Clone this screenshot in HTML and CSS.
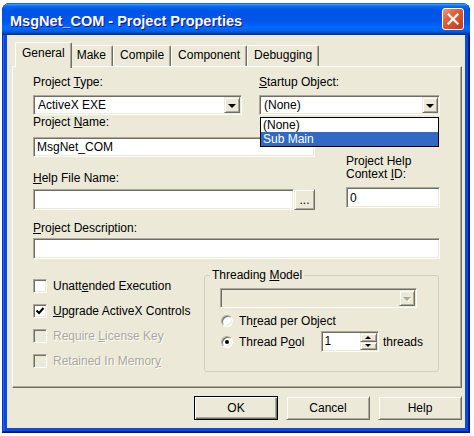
FILE: index.html
```html
<!DOCTYPE html>
<html>
<head>
<meta charset="utf-8">
<link rel="stylesheet" href="styles.css">
</head>
<body>
<div class="window">
  <div class="titlebar">
    <span class="title">MsgNet_COM - Project Properties</span>
    <div class="close">
      <svg width="12" height="12" viewBox="0 0 12 12"><path d="M1.5 1.5L10.5 10.5M10.5 1.5L1.5 10.5" stroke="#fff" stroke-width="2.2" stroke-linecap="square"/></svg>
    </div>
  </div>
  <div class="client">
    <div class="tabs">
      <div class="tab active">General</div>
      <div class="tab">Make</div>
      <div class="tab">Compile</div>
      <div class="tab">Component</div>
      <div class="tab">Debugging</div>
    </div>
    <div class="panel">
      <div class="row-top">
        <div class="col-type">
          <div class="lbl">Project <u>T</u>ype:</div>
          <div class="field combo"><span class="val">ActiveX EXE</span><span class="drop"><i class="tri"></i></span></div>
        </div>
        <div class="col-startup">
          <div class="lbl"><u>S</u>tartup Object:</div>
          <div class="combo-wrap">
            <div class="field combo"><span class="val">(None)</span><span class="drop"><i class="tri"></i></span></div>
            <ul class="listbox">
              <li>(None)</li>
              <li class="sel">Sub Main</li>
            </ul>
          </div>
        </div>
      </div>
      <div class="row-mid">
        <div class="col-left">
          <div class="lbl">Project <u>N</u>ame:</div>
          <div class="field text name-box">MsgNet_COM</div>
          <div class="lbl lbl-help"><u>H</u>elp File Name:</div>
          <div class="file-row">
            <div class="field text"></div>
            <div class="raised btn-browse">...</div>
          </div>
        </div>
        <div class="col-right">
          <div class="lbl lbl-two">Project Help<br>Context <u>I</u>D:</div>
          <div class="field text ctx-box">0</div>
        </div>
      </div>
      <div class="lbl lbl-desc"><u>P</u>roject Description:</div>
      <div class="field text desc-box"></div>
      <div class="row-bottom">
        <div class="checks">
          <div class="chk"><span class="cbox"></span><span>Unatt<u>e</u>nded Execution</span></div>
          <div class="chk"><span class="cbox"><svg width="10" height="10" viewBox="0 0 10 10"><path d="M1.5 4.5L4 7L8.5 2" fill="none" stroke="#000" stroke-width="2"/></svg></span><span><u>U</u>pgrade ActiveX Controls</span></div>
          <div class="chk disabled"><span class="cbox"></span><span>Require <u>L</u>icense Key</span></div>
          <div class="chk disabled"><span class="cbox"></span><span>Retained In Memor<u>y</u></span></div>
        </div>
        <fieldset class="group">
          <legend>Threading <u>M</u>odel</legend>
          <div class="field combo dcombo"><span class="val"></span><span class="drop"><i class="tri dis"></i></span></div>
          <div class="radio-row">
            <span class="radio"></span><span class="rlabel">Th<u>r</u>ead per Object</span>
          </div>
          <div class="radio-row row2">
            <span class="radio on"></span><span class="rlabel pool">Thread P<u>o</u>ol</span>
            <div class="field spin"><span class="val">1</span>
              <span class="spin-btns"><span class="raised sb"><i class="tri-up"></i></span><span class="raised sb"><i class="tri-dn"></i></span></span>
            </div>
            <span class="threads">threads</span>
          </div>
        </fieldset>
      </div>
    </div>
    <div class="buttons">
      <div class="btn default">OK</div>
      <div class="btn raised">Cancel</div>
      <div class="btn raised">Help</div>
    </div>
  </div>
</div>
</body>
</html>
```
FILE: styles.css
```css
* { box-sizing: border-box; }
body {
  margin: 0;
  background: #fff;
  font-family: "Liberation Sans", Arial, sans-serif;
  font-size: 12px;
  color: #000;
}
u { text-decoration: underline; text-underline-offset: 1px; }

.window {
  margin: 3px 0 0 2px;
  width: 468px;
  height: 430px;
  display: flex;
  flex-direction: column;
  background: #0a4bdc;
  border-radius: 8px 8px 0 0;
  box-shadow: inset -1px -1px #00138c, inset 1px 0 #0831d9, inset -2px -2px #001ea0, inset 2px 0 #166aee;
  overflow: hidden;
}
.titlebar {
  height: 32px;
  flex: none;
  display: flex;
  align-items: center;
  justify-content: space-between;
  padding: 0 6px 0 8px;
  border-radius: 8px 8px 0 0;
  background: linear-gradient(to bottom, #0058ee 0%, #3593ff 4%, #288eff 6%, #127dff 8%, #036ffc 10%, #0262ee 14%, #0057e5 20%, #0054e3 24%, #0055eb 56%, #005bf5 66%, #026afe 76%, #0062ef 86%, #0052d6 92%, #0040ab 94%, #003092 100%);
}
.title {
  color: #fff;
  font-weight: bold;
  font-size: 14.5px;
  padding-top: 3px;
  text-shadow: 1px 1px #0f1089;
  white-space: nowrap;
}
.close {
  width: 22px;
  height: 22px;
  border: 1px solid #fff;
  border-radius: 3px;
  background: linear-gradient(135deg, #f09a7c 0%, #e2613d 35%, #d24a26 70%, #c23a1a 100%);
  display: flex;
  align-items: center;
  justify-content: center;
}

.client {
  flex: 1;
  margin: 0 5px 5px;
  background: #ece9d8;
  padding: 7px 3px 8px 5px;
  display: flex;
  flex-direction: column;
}

.tabs {
  height: 24px;
  flex: none;
  display: flex;
  align-items: flex-end;
  padding-left: 5px;
  position: relative;
  z-index: 1;
}
.tab {
  height: 21px;
  padding: 2px 6px 0;
  line-height: 15px;
  white-space: nowrap;
  background: #ece9d8;
  border: 1px solid #fff;
  border-bottom: none;
  border-right-color: #716f64;
  box-shadow: inset -1px 0 #aca899;
  border-radius: 2px 2px 0 0;
}
.tab.active {
  height: 26px;
  margin: 0 -2px -2px;
  padding-top: 3px;
  position: relative;
  z-index: 2;
}

.panel {
  height: 322px;
  flex: none;
  border: 1px solid;
  border-color: #fff #716f64 #716f64 #fff;
  box-shadow: inset -1px -1px #aca899;
  padding: 8px 21px 0 20px;
}

.lbl { line-height: 15px; white-space: nowrap; }

.field {
  background: #fff;
  border: 1px solid;
  border-color: #aca899 #fff #fff #aca899;
  box-shadow: inset 1px 1px #716f64, inset -1px -1px #ece9d8;
}
.raised {
  background: #ece9d8;
  border: 1px solid;
  border-color: #ece9d8 #716f64 #716f64 #ece9d8;
  box-shadow: inset 1px 1px #fff, inset -1px -1px #aca899;
}

.row-top { display: flex; gap: 17px; }
.col-type { width: 209px; }
.col-startup { width: 181px; }
.row-top .lbl { margin-bottom: 5px; }

.combo {
  height: 20px;
  display: flex;
  align-items: center;
  padding: 1px;
}
.combo .val { flex: 1; padding-left: 3px; line-height: 15px; white-space: nowrap; }
.drop {
  width: 16px;
  height: 16px;
  flex: none;
  display: flex;
  align-items: center;
  justify-content: center;
  background: #ece9d8;
  border: 1px solid;
  border-color: #ece9d8 #716f64 #716f64 #ece9d8;
  box-shadow: inset 1px 1px #fff, inset -1px -1px #aca899;
}
.tri {
  width: 0;
  height: 0;
  border-left: 4px solid transparent;
  border-right: 4px solid transparent;
  border-top: 4px solid #000;
  margin-top: 1px;
}
.tri.dis { border-top-color: #aca899; filter: drop-shadow(1px 1px 0 #fff); }

.combo-wrap { position: relative; }
.listbox {
  position: absolute;
  top: 22px;
  left: 1px;
  right: 1px;
  margin: 0;
  padding: 0;
  list-style: none;
  background: #fff;
  border: 1px solid #000;
  z-index: 5;
}
.listbox li { height: 14px; line-height: 14px; padding-left: 2px; white-space: nowrap; }
.listbox li.sel { background: #316ac5; color: #fff; }

.text {
  display: flex;
  align-items: center;
  padding: 0 3px;
  white-space: nowrap;
}

.row-mid {
  display: grid;
  grid-template-columns: 282px 94px;
  column-gap: 31px;
}
.name-box { margin-top: 7px; height: 20px; }
.lbl-help { margin-top: 14px; }
.file-row { margin-top: 3px; display: flex; height: 21px; }
.file-row .text { flex: 1; height: 21px; }
.btn-browse {
  width: 21px;
  height: 21px;
  flex: none;
  display: flex;
  align-items: flex-end;
  justify-content: center;
  padding-bottom: 4px;
  line-height: 10px;
}
.col-right { align-self: end; padding-bottom: 2px; }
.lbl-two { line-height: 13px; }
.ctx-box { margin-top: 6px; height: 21px; }

.lbl-desc { margin-top: 11px; margin-bottom: 2px; }
.desc-box { height: 21px; }

.row-bottom { display: flex; margin-top: 10px; }
.checks { width: 171px; flex: none; padding-top: 10px; }
.chk {
  display: flex;
  align-items: center;
  gap: 6px;
  height: 14px;
  margin-bottom: 11px;
  white-space: nowrap;
}
.cbox {
  width: 14px;
  height: 14px;
  flex: none;
  display: flex;
  align-items: center;
  justify-content: center;
  background: #fff;
  border: 1px solid;
  border-color: #aca899 #fff #fff #aca899;
  box-shadow: inset 1px 1px #716f64, inset -1px -1px #ece9d8;
}
.chk.disabled { color: #aca899; text-shadow: 1px 1px #fff; }
.chk.disabled .cbox { background: #ece9d8; }

.group {
  width: 235px;
  min-width: 0;
  flex: none;
  height: 103px;
  margin: 0;
  padding: 6px 15px 0 15px;
  border: 1px solid #d0d0bf;
  border-radius: 3px;
}
.group legend {
  padding: 0 2px;
  margin-left: -10px;
  line-height: 13px;
}
.dcombo { width: 197px; background: #ece9d8; }

.radio-row {
  display: flex;
  align-items: center;
  height: 15px;
  margin-top: 5px;
  white-space: nowrap;
}
.radio-row.row2 { height: 21px; margin-top: 3px; }
.radio {
  width: 12px;
  height: 12px;
  flex: none;
  margin-left: 1px;
  margin-right: 6px;
  border-radius: 50%;
  background: #fff;
  border: 1px solid;
  border-color: #aca899 #fff #fff #aca899;
  box-shadow: inset 1px 1px #716f64, inset -1px -1px #ece9d8;
  display: flex;
  align-items: center;
  justify-content: center;
}
.radio.on::after {
  content: "";
  width: 4px;
  height: 4px;
  border-radius: 50%;
  background: #000;
}
.rlabel.pool { width: 84px; }
.spin {
  width: 60px;
  height: 21px;
  display: flex;
  align-items: center;
  padding: 1px 1px 1px 3px;
}
.spin .val { flex: 1; line-height: 15px; }
.spin-btns { width: 17px; height: 17px; display: flex; flex-direction: column; }
.sb {
  flex: 1;
  display: flex;
  align-items: center;
  justify-content: center;
}
.tri-up, .tri-dn {
  width: 0;
  height: 0;
  border-left: 3px solid transparent;
  border-right: 3px solid transparent;
}
.tri-up { border-bottom: 3px solid #000; }
.tri-dn { border-top: 3px solid #000; }
.threads { margin-left: 4px; }

.buttons {
  display: flex;
  justify-content: flex-end;
  gap: 8px;
  margin-top: 8px;
}
.btn {
  width: 84px;
  height: 24px;
  display: flex;
  align-items: center;
  justify-content: center;
}
.btn.default {
  background: #ece9d8;
  border: 1px solid #000;
  box-shadow: inset 1px 1px #fff, inset -1px -1px #716f64, inset -2px -2px #aca899;
}
```
